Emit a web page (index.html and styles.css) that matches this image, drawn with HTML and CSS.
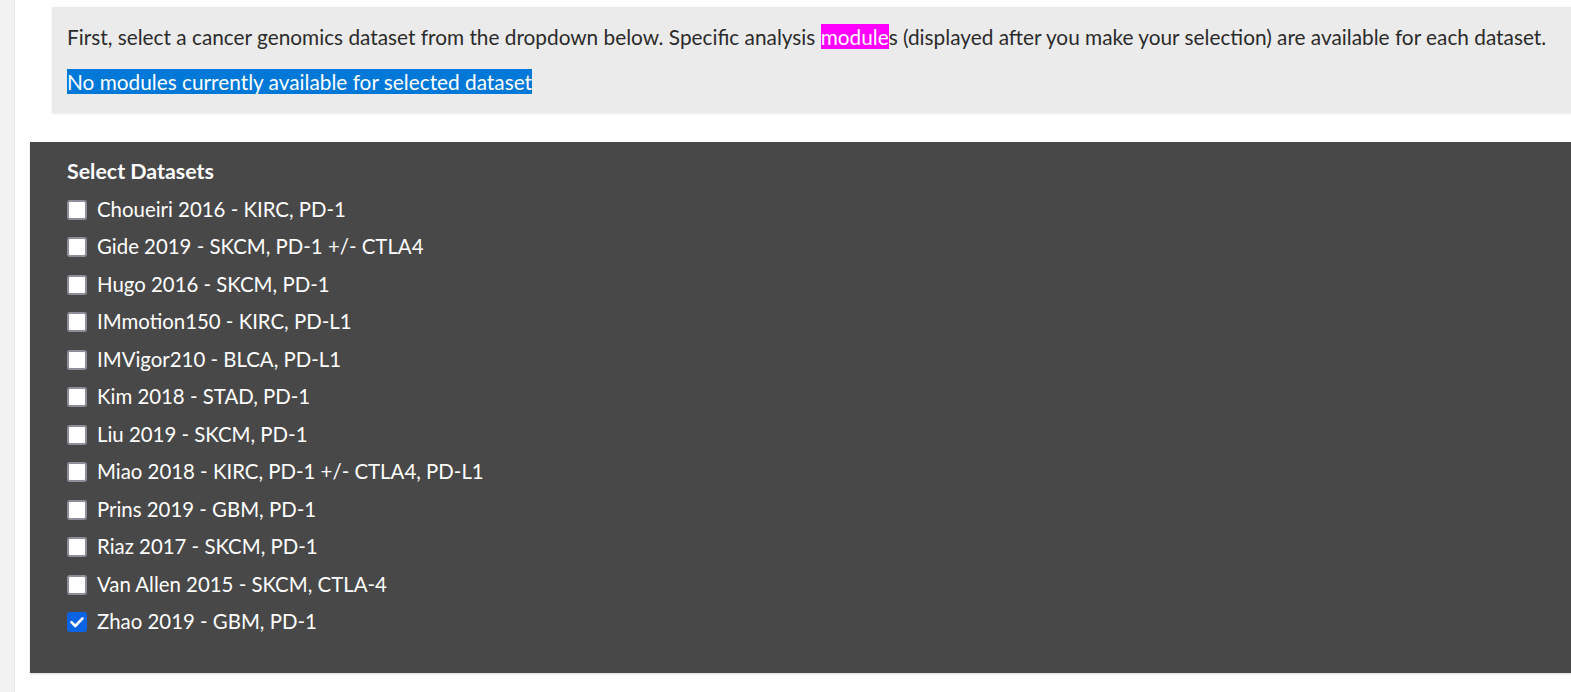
FILE: index.html
```html
<!DOCTYPE html>
<html>
<head>
<meta charset="utf-8">
<link rel="stylesheet" href="styles.css">
</head>
<body>
<div class="page">
  <aside class="sidebar"></aside>
  <main class="main">
    <div class="info">
      <p class="info-line">First, select a cancer genomics dataset from the dropdown below. Specific analysis <span class="hl-pink">module</span>s (displayed after you make your selection) are available for each dataset.</p>
      <p class="info-line last"><span class="hl-blue">No modules currently available for selected dataset</span></p>
    </div>
    <section class="panel">
      <div class="heading">Select Datasets</div>
      <ul class="list">
        <li class="row"><span class="box"></span><span class="lbl">Choueiri 2016 - KIRC, PD-1</span></li>
        <li class="row"><span class="box"></span><span class="lbl">Gide 2019 - SKCM, PD-1 +/- CTLA4</span></li>
        <li class="row"><span class="box"></span><span class="lbl">Hugo 2016 - SKCM, PD-1</span></li>
        <li class="row"><span class="box"></span><span class="lbl">IMmotion150 - KIRC, PD-L1</span></li>
        <li class="row"><span class="box"></span><span class="lbl">IMVigor210 - BLCA, PD-L1</span></li>
        <li class="row"><span class="box"></span><span class="lbl">Kim 2018 - STAD, PD-1</span></li>
        <li class="row"><span class="box"></span><span class="lbl">Liu 2019 - SKCM, PD-1</span></li>
        <li class="row"><span class="box"></span><span class="lbl">Miao 2018 - KIRC, PD-1 +/- CTLA4, PD-L1</span></li>
        <li class="row"><span class="box"></span><span class="lbl">Prins 2019 - GBM, PD-1</span></li>
        <li class="row"><span class="box"></span><span class="lbl">Riaz 2017 - SKCM, PD-1</span></li>
        <li class="row"><span class="box"></span><span class="lbl">Van Allen 2015 - SKCM, CTLA-4</span></li>
        <li class="row"><span class="box checked"><svg viewBox="0 0 20 20" width="20" height="20"><path d="M4.5 10.2 L8.3 14 L15.5 6.4" fill="none" stroke="#fff" stroke-width="2.6" stroke-linecap="round" stroke-linejoin="round"/></svg></span><span class="lbl">Zhao 2019 - GBM, PD-1</span></li>
      </ul>
    </section>
  </main>
</div>
</body>
</html>
```

FILE: styles.css
```css
html, body {
  margin: 0;
  padding: 0;
  background: #ffffff;
  overflow: hidden;
}
body {
  font-family: Lato, "Open Sans", sans-serif;
  font-size: 21px;
  line-height: 30px;
  color: #2b2b2b;
}
.page {
  display: flex;
  min-height: 692px;
  width: 1600px;
}
.sidebar {
  width: 14px;
  flex: 0 0 14px;
  background: #f2f2f2;
  border-right: 1px solid #e6e6e6;
}
.main {
  flex: 1;
  padding-left: 15px;
  padding-top: 7px;
}
.info {
  margin-left: 22px;
  background: #ebebeb;
  padding: 15px 15px 16px 15px;
  box-shadow: 0 1px 2px rgba(0,0,0,0.08);
  font-size: 20.8px;
}
.info-line {
  margin: 0 0 15px 0;
}
.info-line.last {
  margin-bottom: 0;
}
.hl-pink {
  background: #ff00ff;
  color: #ffffff;
}
.hl-blue {
  background: #0078d7;
  color: #ffffff;
}
.panel {
  margin-top: 29px;
  background: #484848;
  color: #ffffff;
  padding: 14px 37px 37px 37px;
  box-shadow: 0 1px 2px rgba(0,0,0,0.15);
  height: 531px;
  box-sizing: border-box;
}
.heading {
  font-weight: 700;
  font-size: 21.4px;
  margin-bottom: 7.5px;
}
.list {
  list-style: none;
  margin: 0;
  padding: 0;
  display: flex;
  flex-direction: column;
  gap: 7.5px;
}
.row {
  display: flex;
  align-items: flex-start;
  height: 30px;
}
.box {
  box-sizing: border-box;
  width: 20px;
  height: 20px;
  flex: 0 0 20px;
  margin-top: 6px;
  margin-right: 10px;
  background: #ffffff;
  border: 2px solid #8f8d9a;
  border-radius: 3px;
  position: relative;
}
.box.checked {
  background: #0b63e4;
  border-color: #0b63e4;
}
.box.checked svg {
  position: absolute;
  left: -2px;
  top: -2px;
}
.lbl {
  white-space: nowrap;
  font-size: 20.4px;
}
```
